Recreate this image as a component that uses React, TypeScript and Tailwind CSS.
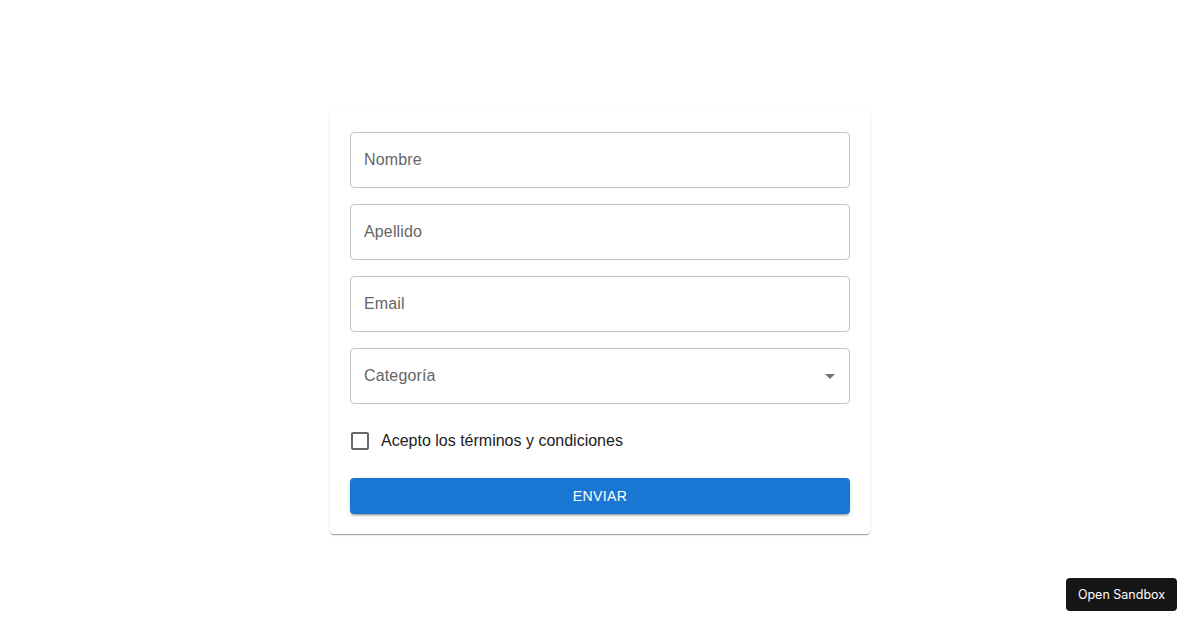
import React from "react";

const font = { fontFamily: '"Liberation Sans", Arial, sans-serif' };

function Field({ label, select }: { label: string; select?: boolean }) {
  return (
    <div className="relative flex h-[56px] w-full items-center rounded-[4px] border border-[#c4c4c4] pl-[13px] pr-[7px]">
      <span className="mb-[2px] flex-1 text-[16px] leading-[23px] tracking-[0.00938em] text-[#666666]">{label}</span>
      {select && (
        <svg width="24" height="24" viewBox="0 0 24 24" className="fill-[#757575]">
          <path d="M7 10l5 5 5-5z" />
        </svg>
      )}
    </div>
  );
}

export default function App() {
  return (
    <div className="relative min-h-[630px] w-full bg-white" style={font}>
      <div className="flex justify-center pt-[112px]">
        <div className="flex w-[540px] flex-col rounded-[4px] bg-white p-[20px] shadow-[0_2px_1px_-1px_rgba(0,0,0,0.2),0_1px_1px_0_rgba(0,0,0,0.14),0_1px_3px_0_rgba(0,0,0,0.12)]">
          <div className="flex flex-col gap-[16px]">
            <Field label="Nombre" />
            <Field label="Apellido" />
            <Field label="Email" />
            <Field label="Categoría" select />
          </div>
          <div className="ml-[-11px] mt-[16px] flex h-[42px] items-center">
            <div className="flex h-[42px] w-[42px] shrink-0 items-center justify-center">
              <svg width="24" height="24" viewBox="0 0 24 24" className="fill-[#666666]">
                <path d="M19 5v14H5V5h14m0-2H5c-1.1 0-2 .9-2 2v14c0 1.1.9 2 2 2h14c1.1 0 2-.9 2-2V5c0-1.1-.9-2-2-2z" />
              </svg>
            </div>
            <span className="text-[16px] leading-[24px] text-[#212121]">
              Acepto los términos y condiciones
            </span>
          </div>
          <button className="mt-[16px] flex h-[36px] w-full items-center justify-center rounded-[4px] bg-[#1976d2] text-[14px] font-normal uppercase tracking-[0.02857em] text-white shadow-[0_3px_1px_-2px_rgba(0,0,0,0.2),0_2px_2px_0_rgba(0,0,0,0.14),0_1px_5px_0_rgba(0,0,0,0.12)]">
            Enviar
          </button>
        </div>
      </div>
      <div className="absolute left-[1066px] top-[578px] flex h-[33px] w-[111px] items-center justify-center rounded-[4px] bg-[#151515] pt-[2px] text-[12.5px] text-white" style={{ fontFamily: 'Inter, "Liberation Sans", sans-serif' }}>
        Open Sandbox
      </div>
    </div>
  );
}
